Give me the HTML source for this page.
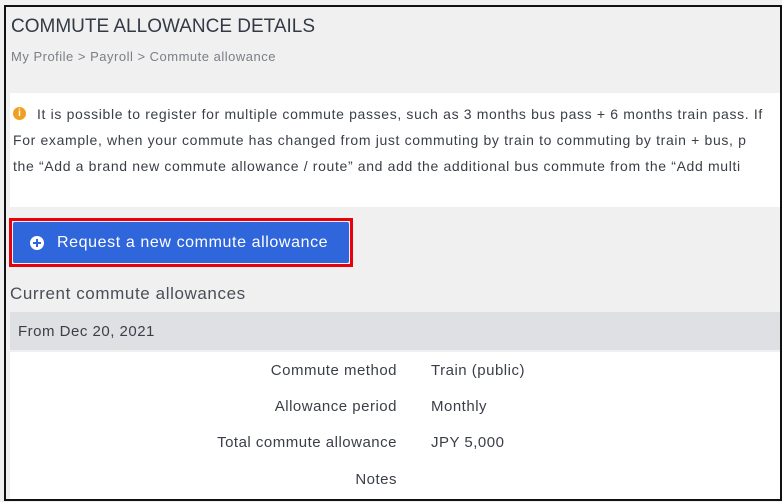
<!DOCTYPE html>
<html><head><style>
body{margin:0;width:782px;height:502px;background:#f0f0f0;font-family:"Liberation Sans",sans-serif;overflow:hidden;position:relative}
.frame{position:absolute;left:4px;top:5px;width:774px;height:492px;border:2px solid #111;border-right:3px solid #111;background:#f0f0f0;overflow:hidden}
.a{position:absolute;white-space:nowrap}
</style></head><body>
<div class="frame">
<div class="a" style="left:5px;top:9px;font-size:19px;color:#333a45">COMMUTE ALLOWANCE DETAILS</div>
<div class="a" style="left:5px;top:42px;font-size:13px;letter-spacing:0.5px;color:#7a7f86">My Profile &gt; Payroll &gt; Commute allowance</div>
<div class="a" style="left:4px;top:86px;width:780px;height:114px;background:#fff"></div>
<div class="a" style="left:7px;top:100px;width:13px;height:13px;border-radius:50%;background:#f0a020;color:#fff;font-size:10px;font-weight:bold;text-align:center;line-height:13px">i</div>
<div class="a" style="left:31px;top:94px;font-size:14px;letter-spacing:0.65px;color:#3a3f47;line-height:26px">It is possible to register for multiple commute passes, such as 3 months bus pass + 6 months train pass. If</div>
<div class="a" style="left:7px;top:120px;font-size:14px;letter-spacing:0.65px;color:#3a3f47;line-height:26px">For example, when your commute has changed from just commuting by train to commuting by train + bus, p</div>
<div class="a" style="left:7px;top:146px;font-size:14px;letter-spacing:0.65px;color:#3a3f47;line-height:26px">the “Add a brand new commute allowance / route” and add the additional bus commute from the “Add multi</div>
<div class="a" style="left:3px;top:211px;width:338px;height:43px;border:3px solid #e8000b"></div>
<div class="a" style="left:7px;top:215px;width:336px;height:41px;background:#3066dc;border-radius:2px"></div>
<div class="a" style="left:24px;top:229px;width:14px;height:14px;border-radius:50%;background:#fff"></div>
<div class="a" style="left:30px;top:232px;width:2px;height:8px;background:#3066dc"></div>
<div class="a" style="left:27px;top:235px;width:8px;height:2px;background:#3066dc"></div>
<div class="a" style="left:51px;top:227px;font-size:16px;letter-spacing:0.6px;color:#fff">Request a new commute allowance</div>
<div class="a" style="left:4px;top:277px;font-size:17px;letter-spacing:0.6px;color:#4a4f57">Current commute allowances</div>
<div class="a" style="left:4px;top:305px;width:780px;height:38px;background:#dfe0e4"></div>
<div class="a" style="left:12px;top:316px;font-size:15px;letter-spacing:0.5px;color:#3a3f47">From Dec 20, 2021</div>
<div class="a" style="left:4px;top:345px;width:780px;height:160px;background:#fff"></div>
<div class="a" style="right:383px;top:346px;font-size:15px;letter-spacing:0.5px;color:#3a3f47;text-align:right;line-height:36px">Commute method<br>Allowance period<br>Total commute allowance</div>
<div class="a" style="right:383px;top:464px;font-size:15px;letter-spacing:0.5px;color:#3a3f47">Notes</div>
<div class="a" style="left:425px;top:346px;font-size:15px;letter-spacing:0.5px;color:#3a3f47;line-height:36px">Train (public)<br>Monthly<br>JPY 5,000</div>
</div>
</body></html>
